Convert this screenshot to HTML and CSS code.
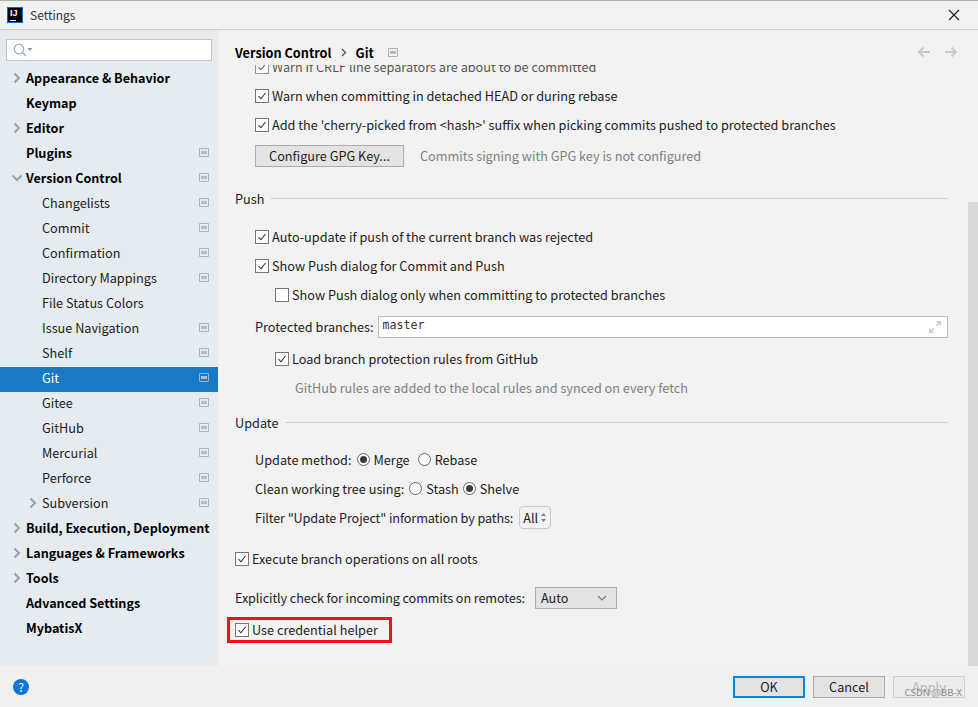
FILE: index.html
```html
<!DOCTYPE html>
<html lang="en">
<head>
<meta charset="utf-8">
<title>Settings</title>
<link rel="stylesheet" href="styles.css">
</head>
<body>
<svg class="defs" width="0" height="0" aria-hidden="true">
  <defs>
    <symbol id="chev-r" viewBox="0 0 10 12"><path d="M2.5 1.5 7 6l-4.500 4.500" fill="none" stroke="currentColor" stroke-width="2"/></symbol>
    <symbol id="chev-d" viewBox="0 0 12 10"><path d="M1.500 2.500 6 7l4.500-4.500" fill="none" stroke="currentColor" stroke-width="2"/></symbol>
    <symbol id="proj" viewBox="0 0 10 9"><path d="M.5.5h9v8h-9z" fill="none" stroke="#a9b3bb"/><path d="M2 3h6v3H2z" fill="#b4bdc4"/></symbol>
    <symbol id="tick" viewBox="0 0 14 14"><path d="M3 7.200 5.800 10.200 11 3.500" fill="none" stroke="#2b2b2b" stroke-width="1.200"/></symbol>
  </defs>
</svg>
<div class="window">
  <header class="titlebar">
    <span class="app-logo"><span class="app-logo-text">IJ</span><span class="app-logo-bar"></span></span>
    <span class="title">Settings</span>
    <svg class="close" width="12" height="12" viewBox="0 0 12 12"><path d="M1 1l10 10M11 1 1 11" stroke="#1a1a1a" stroke-width="1.100" fill="none"/></svg>
  </header>
  <div class="main">
    <aside class="sidebar">
      <div class="search">
        <svg width="22" height="16" viewBox="0 0 22 16"><circle cx="7" cy="7" r="4.800" fill="none" stroke="#9aa3aa" stroke-width="1.100"/><path d="m10.500 10.500 3.500 3.500" stroke="#9aa3aa" stroke-width="1.300"/><path d="M15.500 6h5l-2.500 3z" fill="#8d969d"/></svg>
      </div>
      <nav class="tree">
        <div class="item top"><svg class="arrow"><use href="#chev-r"/></svg><span>Appearance &amp; Behavior</span></div>
        <div class="item top"><span>Keymap</span></div>
        <div class="item top"><svg class="arrow"><use href="#chev-r"/></svg><span>Editor</span></div>
        <div class="item top"><span>Plugins</span><svg class="pin"><use href="#proj"/></svg></div>
        <div class="item top"><svg class="arrow down"><use href="#chev-d"/></svg><span>Version Control</span><svg class="pin"><use href="#proj"/></svg></div>
        <div class="item sub"><span>Changelists</span><svg class="pin"><use href="#proj"/></svg></div>
        <div class="item sub"><span>Commit</span><svg class="pin"><use href="#proj"/></svg></div>
        <div class="item sub"><span>Confirmation</span><svg class="pin"><use href="#proj"/></svg></div>
        <div class="item sub"><span>Directory Mappings</span><svg class="pin"><use href="#proj"/></svg></div>
        <div class="item sub"><span>File Status Colors</span></div>
        <div class="item sub"><span>Issue Navigation</span><svg class="pin"><use href="#proj"/></svg></div>
        <div class="item sub"><span>Shelf</span><svg class="pin"><use href="#proj"/></svg></div>
        <div class="item sub selected"><span>Git</span><svg class="pin"><use href="#proj"/></svg></div>
        <div class="item sub"><span>Gitee</span><svg class="pin"><use href="#proj"/></svg></div>
        <div class="item sub"><span>GitHub</span><svg class="pin"><use href="#proj"/></svg></div>
        <div class="item sub"><span>Mercurial</span><svg class="pin"><use href="#proj"/></svg></div>
        <div class="item sub"><span>Perforce</span><svg class="pin"><use href="#proj"/></svg></div>
        <div class="item sub sub-arrow"><svg class="arrow"><use href="#chev-r"/></svg><span>Subversion</span><svg class="pin"><use href="#proj"/></svg></div>
        <div class="item top"><svg class="arrow"><use href="#chev-r"/></svg><span>Build, Execution, Deployment</span></div>
        <div class="item top"><svg class="arrow"><use href="#chev-r"/></svg><span>Languages &amp; Frameworks</span></div>
        <div class="item top"><svg class="arrow"><use href="#chev-r"/></svg><span>Tools</span></div>
        <div class="item top"><span>Advanced Settings</span></div>
        <div class="item top"><span>MybatisX</span></div>
      </nav>
    </aside>
    <section class="content">
      <div class="crumbs">
        <b>Version Control</b>
        <svg class="crumb-sep" width="6" height="9" viewBox="0 0 6 9"><path d="m1 1 3.500 3.500L1 8" fill="none" stroke="#444" stroke-width="1.100"/></svg>
        <b>Git</b>
        <svg class="crumb-pin"><use href="#proj"/></svg>
        <span class="nav-arrows">
          <svg width="14" height="12" viewBox="0 0 14 12"><path d="M13 6H2M6.500 1.500 2 6l4.500 4.500" fill="none" stroke="#c9c9c9" stroke-width="2"/></svg>
          <svg width="14" height="12" viewBox="0 0 14 12"><path d="M1 6h11M7.500 1.500 12 6l-4.500 4.500" fill="none" stroke="#c9c9c9" stroke-width="2"/></svg>
        </span>
      </div>
      <div class="scroller">
        <div class="panel">
          <div class="row ind1 faded"><span class="cb"><svg><use href="#tick"/></svg></span>Warn if CRLF line separators are about to be committed</div>
          <div class="row ind1"><span class="cb"><svg><use href="#tick"/></svg></span>Warn when committing in detached HEAD or during rebase</div>
          <div class="row ind1"><span class="cb"><svg><use href="#tick"/></svg></span>Add the 'cherry-picked from &lt;hash&gt;' suffix when picking commits pushed to protected branches</div>
          <div class="row ind1 button-row"><span class="btn gpg">Configure GPG Key...</span><span class="hint">Commits signing with GPG key is not configured</span></div>
          <div class="group push"><span>Push</span><i></i></div>
          <div class="row ind1"><span class="cb"><svg><use href="#tick"/></svg></span>Auto-update if push of the current branch was rejected</div>
          <div class="row ind1"><span class="cb"><svg><use href="#tick"/></svg></span>Show Push dialog for Commit and Push</div>
          <div class="row ind2"><span class="cb"></span>Show Push dialog only when committing to protected branches</div>
          <div class="row ind0 prot"><span>Protected branches:</span><span class="field"><span class="mono">master</span>
            <svg width="14" height="14" viewBox="0 0 14 14"><path d="M8 1h5v5l-2-2-2.500 2.500-1-1L10 3zM6 13H1V8l2 2 2.500-2.500 1 1L4 11z" fill="#c3cbd1"/></svg></span></div>
          <div class="row ind2"><span class="cb"><svg><use href="#tick"/></svg></span>Load branch protection rules from GitHub</div>
          <div class="row ind-note hint">GitHub rules are added to the local rules and synced on every fetch</div>
          <div class="group update"><span>Update</span><i></i></div>
          <div class="row ind0"><span class="lbl">Update method:</span><span class="rb on"></span><span class="opt">Merge</span><span class="rb"></span><span>Rebase</span></div>
          <div class="row ind0"><span class="lbl">Clean working tree using:</span><span class="rb"></span><span class="opt opt-tight">Stash</span><span class="rb on"></span><span>Shelve</span></div>
          <div class="row ind0"><span class="tight">Filter "Update Project" information by paths:</span><span class="spin">All<svg width="7" height="11" viewBox="0 0 7 11"><path d="M3.500 1 6 4H1zM3.500 10 1 7h5z" fill="#7d7d7d"/></svg></span></div>
          <div class="row flush exec"><span class="cb"><svg><use href="#tick"/></svg></span>Execute branch operations on all roots</div>
          <div class="row flush check-row"><span class="tight">Explicitly check for incoming commits on remotes:</span><span class="combo">Auto<svg width="10" height="6" viewBox="0 0 10 6"><path d="m1 1 4 4 4-4" fill="none" stroke="#777" stroke-width="1.100"/></svg></span></div>
          <div class="row flush cred"><span class="marked"><span class="cb"><svg><use href="#tick"/></svg></span>Use credential helper</span></div>
        </div>
        <div class="track"><div class="thumb"></div></div>
      </div>
    </section>
  </div>
  <footer class="footer">
    <span class="help">?</span>
    <span class="actions">
      <span class="btn primary">OK</span>
      <span class="btn">Cancel</span>
      <span class="btn disabled">Apply<span class="watermark">CSDN @BB-X</span></span>
    </span>
  </footer>
</div>
</body>
</html>
```
FILE: styles.css
```css
* { box-sizing: border-box; }
html, body { margin: 0; padding: 0; height: 100%; }
body { background: #f2f2f2; font-family: "Noto Sans CJK SC", "Noto Sans", sans-serif; font-size: 12.7px; color: #1c1c1c; overflow: hidden; }
.defs { position: absolute; }
.window { width: 978px; height: 707px; display: flex; flex-direction: column; background: #f2f2f2; }
.titlebar { height: 30px; flex: none; display: flex; align-items: center; padding: 0 18px 1px 7px; border-top: 1px solid #a8b4a8; border-bottom: 1px solid #cfcfcf; }
.app-logo { width: 16px; height: 16px; background: #000; border: 1px solid #0a6cc9; position: relative; display: block; flex: none; }
.app-logo-text { position: absolute; left: 2px; top: 0; font: bold 9px/10px "Liberation Sans", sans-serif; color: #fff; }
.app-logo-bar { position: absolute; left: 2px; bottom: 1px; width: 6px; height: 1px; background: #fff; }
.title { margin-left: 7px; font-size: 12px; color: #333; }
.close { margin-left: auto; }
.main { flex: 1; display: flex; min-height: 0; }
.sidebar { width: 218px; flex: none; background: #e6ebf0; padding-top: 9px; }
.search { margin: 0 6px; height: 22px; background: #fff; border: 1px solid #c4c4c4; display: flex; align-items: center; padding-left: 5px; }
.tree { margin-top: 6px; }
.item { height: 25px; display: flex; align-items: center; position: relative; padding: 0 9px 4px 26px; white-space: nowrap; }
.item.top { font-weight: 700; color: #000; font-size: 12.600px; }
.item.sub { padding-left: 42px; }
.item .arrow { position: absolute; left: 12px; top: 5px; width: 10px; height: 12px; color: #9aa1a7; }
.item .arrow.down { left: 11px; width: 12px; height: 10px; top: 6px; }
.sub-arrow .arrow { left: 28px !important; }
.pin { margin-left: auto; width: 10px; height: 9px; flex: none; }
.selected { background: #1a79c4; color: #fff; }
.content { flex: 1; min-width: 0; display: flex; flex-direction: column; }
.crumbs { height: 35px; flex: none; padding: 9px 20px 0 17px; display: flex; align-items: center; gap: 9px; color: #000; }
.crumb-pin { width: 10px; height: 9px; margin-left: 5px; }
.nav-arrows { margin-left: auto; display: flex; gap: 13px; }
.scroller { flex: 1; min-height: 0; display: flex; overflow: hidden; }
.panel { flex: 1; min-width: 0; padding: 0 20px 0 17px; overflow: hidden; }
.track { width: 10px; flex: none; padding-top: 137px; }
.thumb { height: 100%; background: #dadada; }
.row { height: 29px; display: flex; align-items: center; white-space: nowrap; }
.panel > .row:first-child { margin-top: -13px; }
.faded { opacity: .75; }
.tight { letter-spacing: -.12px; }
.ind0 { padding-left: 20px; }
.ind1 { padding-left: 20px; }
.ind2 { padding-left: 40px; }
.ind-note { padding-left: 60px; }
.flush { padding-left: 0; }
.cb { width: 14px; height: 14px; border: 1px solid #767676; background: #fff; margin-right: 3px; flex: none; display: block; }
.cb svg { width: 12px; height: 12px; display: block; }
.hint { color: #7f7f7f; }
.btn { height: 22px; display: inline-flex; align-items: center; justify-content: center; border: 1px solid #ababab; background: #e3e3e3; }
.gpg { width: 149px; }
.button-row { height: 33px; }
.button-row .hint { margin-left: 16px; }
.group { display: flex; align-items: center; gap: 7px; height: 20px; }
.group i { flex: 1; height: 1px; background: #cfcfcf; }
.push { margin-top: 16px; margin-bottom: 14px; }
.update { margin-top: 10px; margin-bottom: 13px; }
.prot { height: 33px; margin-top: 1px; margin-bottom: 1px; }
.field { flex: 1; height: 22px; background: #fff; border: 1px solid #bdbdbd; margin-left: 4px; display: flex; align-items: center; justify-content: space-between; padding: 0 5px 0 4px; }
.mono { font-family: "DejaVu Sans Mono", monospace; font-size: 11.600px; color: #333; padding-bottom: 3px; }
.rb { width: 13px; height: 13px; border-radius: 50%; border: 1px solid #666; background: #fff; margin-right: 4px; flex: none; display: block; position: relative; }
.rb.on::after { content: ""; position: absolute; inset: 2px; border-radius: 50%; background: #3c3c3c; }
.lbl { margin-right: 5px; }
.opt { margin-right: 8px; }
.opt-tight { margin-right: 4px; }
.spin { height: 23px; margin-left: 6px; border: 1px solid #c9c9c9; border-radius: 4px; display: inline-flex; align-items: center; gap: 2px; padding: 0 3px; }
.exec { margin-top: 12px; }
.check-row { margin-top: 10px; }
.combo { width: 82px; height: 22px; margin-left: 10px; background: #e3e3e3; border: 1px solid #ababab; display: flex; align-items: center; justify-content: space-between; padding: 0 9px 0 5px; }
.cred { margin-top: 3px; }
.marked { display: inline-flex; align-items: center; height: 20px; outline: 3px solid #e8141f; padding: 0 11px 0 5px; margin-left: -5px; }
.footer { height: 41px; flex: none; display: flex; align-items: center; padding: 0 13px; background: #f0f0f0; }
.help { width: 16px; height: 16px; border-radius: 50%; background: #0b78d8; color: #fff; font-size: 12px; line-height: 16px; text-align: center; }
.actions { margin-left: auto; display: flex; gap: 8px; }
.actions .btn { width: 72px; }
.primary { border: 2px solid #0a84e0 !important; }
.disabled { color: #b8b8b8; border-color: #d0d0d0 !important; background: #ececec !important; position: relative; }
.watermark { position: absolute; right: 2px; top: 8px; font-size: 9.600px; color: #8a8a8a; white-space: nowrap; }
```
